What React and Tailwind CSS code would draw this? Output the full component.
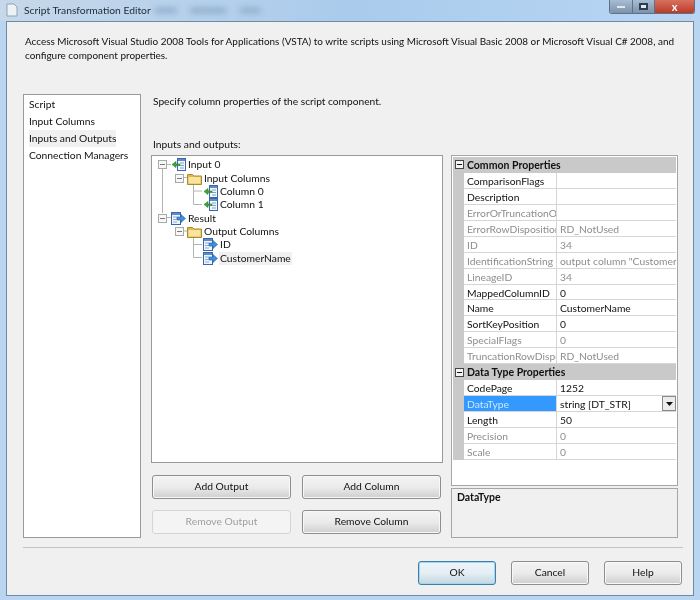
import React from "react";

const Btn = ({ w = "w-[139px]", children, disabled, primary, className = "" }) => (
  <div
    className={`${w} h-[24px] shrink-0 flex items-center justify-center rounded-[3px] border text-[10.3px] ${
      disabled
        ? "border-[#d4d4d4] bg-[#f4f4f4] text-[#a0a0a0]"
        : primary
        ? "border-[#3c7fb1] bg-gradient-to-b from-[#eef5f9] via-[#e4eef4] to-[#c4d6e0] text-[#111] shadow-[inset_0_0_0_1px_#a6d5ec]"
        : "border-[#8e8e8e] bg-gradient-to-b from-[#f3f3f3] via-[#ebebeb] to-[#cfcfcf] text-[#111] shadow-[inset_0_0_0_1px_#f8f8f8]"
    } ${className}`}
  >
    {children}
  </div>
);

const Box = () => (
  <svg width="9" height="9" viewBox="0 0 9 9" className="shrink-0">
    <rect x="0.5" y="0.5" width="8" height="8" fill="#f7f7f7" stroke="#a9a9a9" />
    <path d="M2 4.5H7" stroke="#7a7a7a" />
  </svg>
);

const InIcon = () => (
  <svg width="15" height="13" viewBox="0 0 15 13" className="shrink-0">
    <rect x="6.5" y="0.5" width="8" height="12" fill="#f2f7fd" stroke="#3a67a8" />
    <rect x="7" y="1" width="7" height="2" fill="#5f8cc8" />
    <path d="M9 5H13M9 7.5H13M9 10H13" stroke="#7f9fc8" />
    <path d="M9 6H5V3.5L1 6.5L5 9.5V7.5H9Z" fill="#3ea33e" stroke="#2c7f2c" strokeWidth="0.6" />
  </svg>
);

const OutIcon = () => (
  <svg width="15" height="13" viewBox="0 0 15 13" className="shrink-0">
    <rect x="0.5" y="0.5" width="9" height="12" fill="#eef4fc" stroke="#3a67a8" />
    <rect x="1" y="1" width="8" height="2" fill="#5f8cc8" />
    <path d="M2 5H6M2 7.5H6M2 10H6" stroke="#8fadd2" />
    <path d="M6 5H10V2.5L14.5 6.5L10 10.5V8H6Z" fill="#3f8fdc" stroke="#2a64a8" strokeWidth="0.6" />
  </svg>
);

const Folder = () => (
  <svg width="15" height="13" viewBox="0 0 15 13" className="shrink-0">
    <path d="M0.5 2.5H5.5L7 4H14.5V12.5H0.5Z" fill="#e0b84e" stroke="#a98a35" />
    <path d="M1.5 5H13.5V11.5H1.5Z" fill="#f8e49c" />
  </svg>
);

const treeRows = [
  { ml: "ml-[6px]", gap: "mr-[4px]", box: true, icon: <InIcon />, label: "Input 0" },
  { ml: "ml-[23px]", gap: "mr-[3px]", box: true, icon: <Folder />, label: "Input Columns" },
  { ml: "ml-[51px]", icon: <InIcon />, label: "Column 0" },
  { ml: "ml-[51px]", icon: <InIcon />, label: "Column 1" },
  { ml: "ml-[6px]", gap: "mr-[4px]", box: true, icon: <OutIcon />, label: "Result" },
  { ml: "ml-[23px]", gap: "mr-[3px]", box: true, icon: <Folder />, label: "Output Columns" },
  { ml: "ml-[51px]", icon: <OutIcon />, label: "ID" },
  { ml: "ml-[51px]", icon: <OutIcon />, label: "CustomerName", sel: true },
];

const common = [
  ["ComparisonFlags", "", 1],
  ["Description", "", 1],
  ["ErrorOrTruncationO", "", 0],
  ["ErrorRowDisposition", "RD_NotUsed", 0],
  ["ID", "34", 0],
  ["IdentificationString", 'output column "Customer', 0],
  ["LineageID", "34", 0],
  ["MappedColumnID", "0", 1],
  ["Name", "CustomerName", 1],
  ["SortKeyPosition", "0", 1],
  ["SpecialFlags", "0", 0],
  ["TruncationRowDispo", "RD_NotUsed", 0],
];

const dataType = [
  ["CodePage", "1252", 1],
  ["DataType", "string [DT_STR]", 1, true],
  ["Length", "50", 1],
  ["Precision", "0", 0],
  ["Scale", "0", 0],
];

const Row = ({ name, value, on, sel }) => (
  <div className="flex h-[15.95px] bg-[#c9c9c9] text-[10.3px] leading-[16px]">
    <div className="w-[11px] shrink-0" />
    <div
      className={`w-[93px] shrink-0 pl-[3px] overflow-hidden whitespace-nowrap border-b border-r ${
        sel ? "bg-[#3399ff] text-[#cfe6ff] border-[#d6d6d6]" : `bg-white border-[#d6d6d6] ${on ? "text-[#111]" : "text-[#8d8d8d]"}`
      }`}
    >
      {name}
    </div>
    <div
      className={`flex-1 min-w-0 pl-[3px] flex bg-white overflow-hidden whitespace-nowrap border-b border-[#d6d6d6] ${
        on ? "text-[#111]" : "text-[#8d8d8d]"
      }`}
    >
      <span className="flex-1 overflow-hidden">{value}</span>
      {sel && (
        <span className="w-[14px] h-[15px] shrink-0 flex items-center justify-center border border-[#8a8a8a] bg-[#ececec]">
          <svg width="7" height="4" viewBox="0 0 7 4"><path d="M0 0H7L3.5 4Z" fill="#111" /></svg>
        </span>
      )}
    </div>
  </div>
);

const Header = ({ children }) => (
  <div className="flex items-center h-[15.95px] bg-[#c9c9c9] text-[10.5px] font-bold text-[#111]">
    <svg width="9" height="9" viewBox="0 0 9 9" className="ml-[2px] mr-[3px] shrink-0">
      <rect x="0.5" y="0.5" width="8" height="8" fill="#f4f4f4" stroke="#444" />
      <path d="M2 4.5H7" stroke="#111" />
    </svg>
    <span className="pt-[1px]">{children}</span>
  </div>
);

export default function App() {
  return (
    <div className="w-[700px] h-[600px] overflow-hidden flex flex-col bg-[#b9d5f0] font-['Lato','Open_Sans',sans-serif] text-[#111] blur-[0.3px]">
      <div className="relative h-[21px] shrink-0 flex items-center pl-[24px] text-[10.3px] text-[#1c2a38] bg-gradient-to-r from-[#c6d8ea] via-[#aacbec] to-[#b8d6f4]">
        <svg width="12" height="14" viewBox="0 0 12 14" className="absolute left-[6px] top-[3px]">
          <path d="M1 1H8L11 4V13H1Z" fill="#eef2f6" stroke="#8fa3b6" />
        </svg>
        Script Transformation Editor
        <div className="absolute left-[155px] top-[8px] w-[22px] h-[5px] bg-[#8aa8c8] blur-[3px]" />
        <div className="absolute left-[190px] top-[8px] w-[36px] h-[5px] bg-[#8aa8c8] blur-[3px]" />
        <div className="absolute left-[240px] top-[8px] w-[20px] h-[5px] bg-[#8aa8c8] blur-[3px]" />
        <div className="absolute right-[5px] top-0 flex h-[14px] rounded-b-[3px] overflow-hidden border border-t-0 border-[#5c7288]">
          <div className="w-[23px] flex items-center justify-center bg-gradient-to-b from-[#a7bdd3] to-[#7d93aa] border-r border-[#5c7288]">
            <div className="w-[8px] h-[2px] bg-[#dfe7ef]" />
          </div>
          <div className="w-[22px] flex items-center justify-center bg-gradient-to-b from-[#a7bdd3] to-[#7d93aa] border-r border-[#5c7288]">
            <div className="w-[9px] h-[7px] border-2 border-[#2c3f52] bg-[#dfe7ef]" />
          </div>
          <div className="w-[39px] flex items-center justify-center bg-gradient-to-b from-[#d9705e] to-[#b83a28] text-white text-[11px] font-bold leading-none">
            x
          </div>
        </div>
      </div>

      <div className="flex-1 mx-[6px] mb-[4px] min-h-0 flex flex-col bg-[#f0f0f0] border border-[#6f8aa5] pt-[12px] px-[16px]">
        <p className="ml-[2px] w-[655px] h-[60px] shrink-0 text-[9.95px] leading-[14px] text-[#111]">
          Access Microsoft Visual Studio 2008 Tools for Applications (VSTA) to write scripts using Microsoft Visual Basic 2008 or Microsoft Visual C# 2008, and configure component properties.
        </p>

        <div className="flex h-[444px] shrink-0">
          <div className="w-[118px] shrink-0 bg-white border border-[#9a9a9a] px-[5px] pt-[1px] text-[10.3px] leading-[17px]">
            <div>Script</div>
            <div>Input Columns</div>
            <div className="w-fit bg-[#f0f0f0]">Inputs and Outputs</div>
            <div>Connection Managers</div>
          </div>

          <div className="ml-[10px] flex-1 min-w-0 flex flex-col">
            <div className="ml-[2px] h-[15px] text-[10.2px] leading-[15px]">Specify column properties of the script component.</div>
            <div className="flex-1 mt-[26px] flex gap-[8px] min-h-0">
              <div className="w-[292px] shrink-0 flex flex-col">
                <div className="ml-[2px] mt-[2px] h-[18px] text-[10.3px] leading-[14px]">Inputs and outputs:</div>
                <div className="relative h-[308px] shrink-0 bg-white border border-[#9a9a9a] pt-[2px]">
                  <svg width="80" height="110" className="absolute left-0 top-0">
                    <path d="M10.5 12V57M15 8.5H19M31 21.5H35M41.5 26V48.5H50M41.5 35H50M15 61.5H19M31 75H35M41.5 79V101.5H50M41.5 88.5H50" stroke="#b4b4b4" fill="none" />
                  </svg>
                  {treeRows.map((r) => (
                    <div key={r.label} className={`relative flex items-center h-[13.35px] ${r.ml}`}>
                      {r.box && <span className={`${r.gap} flex`}><Box /></span>}
                      {r.icon}
                      <span className={`ml-[1px] px-[1px] text-[10.3px] leading-[13px] whitespace-nowrap ${r.sel ? "bg-[#f0f0f0]" : ""}`}>{r.label}</span>
                    </div>
                  ))}
                </div>
                <div className="mt-[12px] grid grid-cols-[139px_139px] gap-x-[11px] gap-y-[11px] ml-[1px]">
                  <Btn>Add Output</Btn>
                  <Btn>Add Column</Btn>
                  <Btn disabled>Remove Output</Btn>
                  <Btn>Remove Column</Btn>
                </div>
              </div>

              <div className="w-[227px] shrink-0 flex flex-col mt-[20px]">
                <div className="h-[331px] shrink-0 bg-white border border-[#a6a6a6] p-[1px] flex flex-col">
                  <Header>Common Properties</Header>
                  {common.map(([n, v, on]) => <Row key={n} name={n} value={v} on={on} />)}
                  <Header>Data Type Properties</Header>
                  {dataType.map(([n, v, on, s]) => <Row key={n} name={n} value={v} on={on} sel={s} />)}
                </div>
                <div className="mt-[2px] h-[50px] shrink-0 border border-[#a6a6a6] bg-[#f0f0f0] px-[5px] pt-[1px] text-[10.5px] font-bold text-[#111]">DataType</div>
              </div>
            </div>
          </div>
        </div>

        <div className="mt-[9px] h-[1px] shrink-0 w-[660px] bg-[#c4c4c4]" />
        <div className="mt-[13px] flex ml-[395px] gap-[15px]">
          <Btn w="w-[78px]" primary>OK</Btn>
          <Btn w="w-[78px]">Cancel</Btn>
          <Btn w="w-[78px]">Help</Btn>
        </div>
      </div>
    </div>
  );
}
